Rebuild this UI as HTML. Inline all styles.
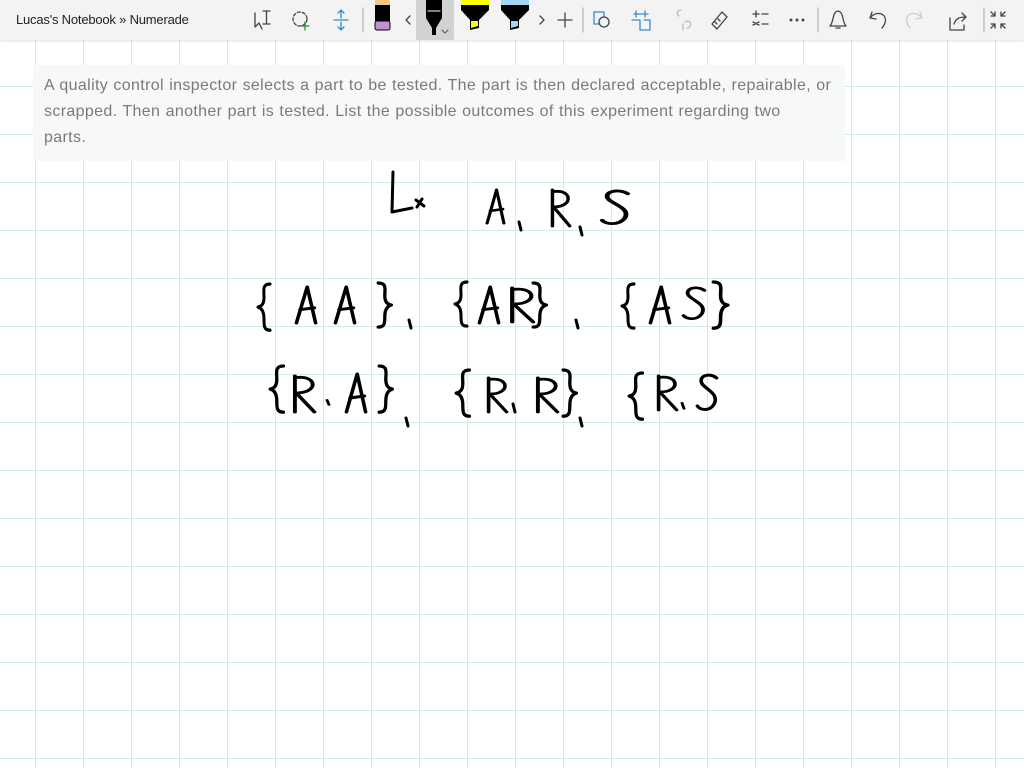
<!DOCTYPE html>
<html><head><meta charset="utf-8"><style>
body{margin:0;width:1024px;height:768px;overflow:hidden;background:#fff;font-family:"Liberation Sans",sans-serif;position:relative}
.grid{position:absolute;left:0;top:0;width:1024px;height:768px;
background-image:linear-gradient(to right,#d2eaee 1px,transparent 1px),linear-gradient(to bottom,#d2eaee 1px,transparent 1px);
background-size:48px 48px;background-position:35px 86px}
.tb{position:absolute;left:0;top:0;width:1024px;height:40px;background:#f3f3f3;box-shadow:0 1px 3px rgba(0,0,0,.12)}
.title{position:absolute;left:16px;top:12px;font-size:13px;color:#222;letter-spacing:-0.2px}
.card{position:absolute;left:33px;top:65px;width:812px;height:96px;background:#f6f8fa}
.card p{margin:0;position:absolute;left:11px;top:8px;width:800px;font-size:16px;line-height:26px;color:#7a7a7a;letter-spacing:0.35px;word-spacing:0.5px;white-space:nowrap}
svg{position:absolute;left:0;top:0}
</style></head><body>
<div class="grid"></div>
<div class="card"><p>A quality control inspector selects a part to be tested. The part is then declared acceptable, repairable, or<br>scrapped. Then another part is tested. List the possible outcomes of this experiment regarding two<br>parts.</p></div>
<div class="tb"><div class="title">Lucas's Notebook » Numerade</div></div>
<svg width="1024" height="768" viewBox="0 0 1024 768">
<defs>
<path id="A" d="M2 40 L11 2 L18 40 M5 26 L17 24"/>
<path id="R" d="M3 2 L3 40 M3 4 C20 0 22 20 4 20 L18 40"/>
<path id="S" d="M18 6 C12 0 2 4 6 12 C10 18 20 22 16 32 C12 40 4 38 2 34"/>
<path id="LB" d="M14 0 C6 0 8 6 8 12 C8 18 6 20 2 21 C6 22 8 26 8 32 C8 38 8 42 14 42"/>
<path id="RB" d="M2 0 C10 0 8 6 8 12 C8 18 10 20 14 21 C10 22 8 26 8 32 C8 38 8 42 2 42"/>
<path id="C" d="M0 0 L2 8"/>
</defs>
<g fill="none" stroke="#000" stroke-width="3" stroke-linecap="round" stroke-linejoin="round">
<g stroke-width="1.3" stroke="#444">
<path d="M255 13 L255 27 L259 23 L262 29 M263 11 L270 11 M266.5 11 L266.5 24 M263 24 L270 24"/>
<circle cx="300" cy="19" r="7" stroke-dasharray="3 2"/>
<path d="M305 22 L305 30 M301 26 L309 26" stroke="#2a8a3a"/>
<path d="M334 20 L348 20 M341 10 L341 18 M338 13 L341 10 L344 13 M341 22 L341 30 M338 27 L341 30 L344 27" stroke="#3a8ac8"/>
<path d="M363 8 L363 32 M818 8 L818 32 M984 8 L984 32 M583 8 L583 32" stroke="#bbb"/>
<path d="M410 16 L406 20 L410 24 M540 16 L544 20 L540 24 M558 20 L572 20 M565 13 L565 27"/>
<path d="M594 12 L604 12 L604 17 M594 12 L594 24 L600 24" stroke="#3a8ac8"/><circle cx="604" cy="22" r="5"/>
<path d="M634 14 L648 14 M636 11 L636 17 M645 11 L645 17 M632 20 L640 20 L640 30 L650 30 L650 20 L644 20" stroke="#3a8ac8"/>
<path d="M712 24 L722 12 L727 17 L717 29 Z M715 22 L717 24 M718 19 L720 21"/>
<path d="M753 14 L759 14 M756 11 L756 17 M762 14 L768 14 M753 25 L759 22 M753 22 L759 25 M762 24 L768 24"/>
<circle cx="791" cy="20" r=".8"/><circle cx="797" cy="20" r=".8"/><circle cx="803" cy="20" r=".8"/>
<path d="M830 26 L846 26 C842 22 844 12 838 11 C832 12 834 22 830 26 M836 28 L840 28"/>
<path d="M872 12 L870 18 L876 19 M870 18 C878 8 892 16 882 28" />
<path d="M920 12 L922 18 L916 19 M922 18 C914 8 900 16 910 28" stroke="#ccc"/>
<path d="M950 18 L950 30 L964 30 L964 25 M954 24 C956 18 960 17 966 17 M962 13 L966 17 L962 21"/>
<path d="M991 12 L995 16 M995 12 L995 16 L991 16 M1005 12 L1001 16 M1001 12 L1001 16 L1005 16 M991 28 L995 24 M991 24 L995 24 L995 28 M1005 28 L1001 24 M1001 28 L1001 24 L1005 24"/>
<path d="M681 10 C677 10 676 14 679 16 M683 24 L683 30 M685 22 C691 18 693 28 687 28" stroke="#bbb"/>
</g>
<g stroke="none">
<rect x="375" y="0" width="15" height="5" fill="#f3c98a"/>
<rect x="375" y="5" width="15" height="16" fill="#000"/>
<rect x="375" y="21" width="15" height="9" rx="2" fill="#c58fd6" stroke="#000" stroke-width="1"/>
<rect x="416" y="0" width="38" height="40" fill="#d2d2d2"/>
<path d="M426 0 L442 0 L442 18 L436 28 L436 35 L432 35 L432 28 L426 18 Z" fill="#000"/>
<path d="M428 11 L440 11" stroke="#fff" stroke-width="1"/>
<path d="M442 30 L445 33 L448 30" stroke="#555" stroke-width="1" fill="none"/>
<rect x="461" y="0" width="28" height="5" fill="#ffff00"/>
<path d="M461 5 L489 5 L489 10 L479 20 L479 28 L470 30 L470 20 L461 10 Z" fill="#000"/>
<path d="M471 21 L478 21 L478 26 L471 28 Z" fill="#ffff00"/>
<rect x="501" y="0" width="28" height="5" fill="#a6d4f5"/>
<path d="M501 5 L529 5 L529 10 L519 20 L519 28 L510 30 L510 20 L501 10 Z" fill="#000"/>
<path d="M511 21 L518 21 L518 26 L511 28 Z" fill="#a6d4f5"/>
</g>
<path d="M393 172 L392 212 L412 208 M416 200 L424 206 M422 199 L417 207"/>
<use href="#A" transform="translate(485,188) scale(1.05,0.88)"/>
<use href="#C" transform="translate(519,222)"/>
<use href="#R" transform="translate(549,188) scale(1.15,0.95)"/>
<use href="#C" transform="translate(580,227)"/>
<use href="#S" transform="translate(599,188) scale(1.6,0.95)"/>
<use href="#LB" transform="translate(256,284) scale(1,1.1)"/>
<use href="#A" transform="translate(294,285) scale(1.2,0.95)"/>
<use href="#A" transform="translate(333,285) scale(1.2,0.95)"/>
<use href="#RB" transform="translate(376,283) scale(1.1,1.05)"/>
<use href="#C" transform="translate(409,320)"/>
<use href="#LB" transform="translate(453,282) scale(1,1.05)"/>
<use href="#A" transform="translate(477,285) scale(1.2,0.95)"/>
<use href="#R" transform="translate(508,286) scale(1.4,0.9)"/>
<use href="#RB" transform="translate(531,283) scale(1.1,1.05)"/>
<use href="#C" transform="translate(576,320)"/>
<use href="#LB" transform="translate(620,284) scale(1,1.05)"/>
<use href="#A" transform="translate(648,285) scale(1.2,0.95)"/>
<use href="#S" transform="translate(681,285) scale(1.3,0.9)"/>
<use href="#RB" transform="translate(711,282) scale(1.2,1.1)"/>
<use href="#LB" transform="translate(268,366) scale(1.1,1.1)"/>
<use href="#R" transform="translate(291,374) scale(1.3,0.95)"/>
<use href="#C" transform="translate(327,400) scale(1,0.6)"/>
<use href="#A" transform="translate(344,372) scale(1.2,1)"/>
<use href="#RB" transform="translate(377,366) scale(1.1,1.1)"/>
<use href="#C" transform="translate(406,418)"/>
<use href="#LB" transform="translate(454,370) scale(1.1,1.1)"/>
<use href="#R" transform="translate(485,376) scale(1.2,0.9)"/>
<use href="#C" transform="translate(513,404)"/>
<use href="#R" transform="translate(534,376) scale(1.3,0.9)"/>
<use href="#RB" transform="translate(561,370) scale(1.1,1.1)"/>
<use href="#C" transform="translate(580,418)"/>
<use href="#LB" transform="translate(627,373) scale(1.1,1.1)"/>
<use href="#R" transform="translate(655,374) scale(1.2,0.9)"/>
<use href="#C" transform="translate(682,403) scale(1,0.7)"/>
<use href="#S" transform="translate(695,372) scale(1.2,1)"/>
</g>
</svg>
</body></html>
